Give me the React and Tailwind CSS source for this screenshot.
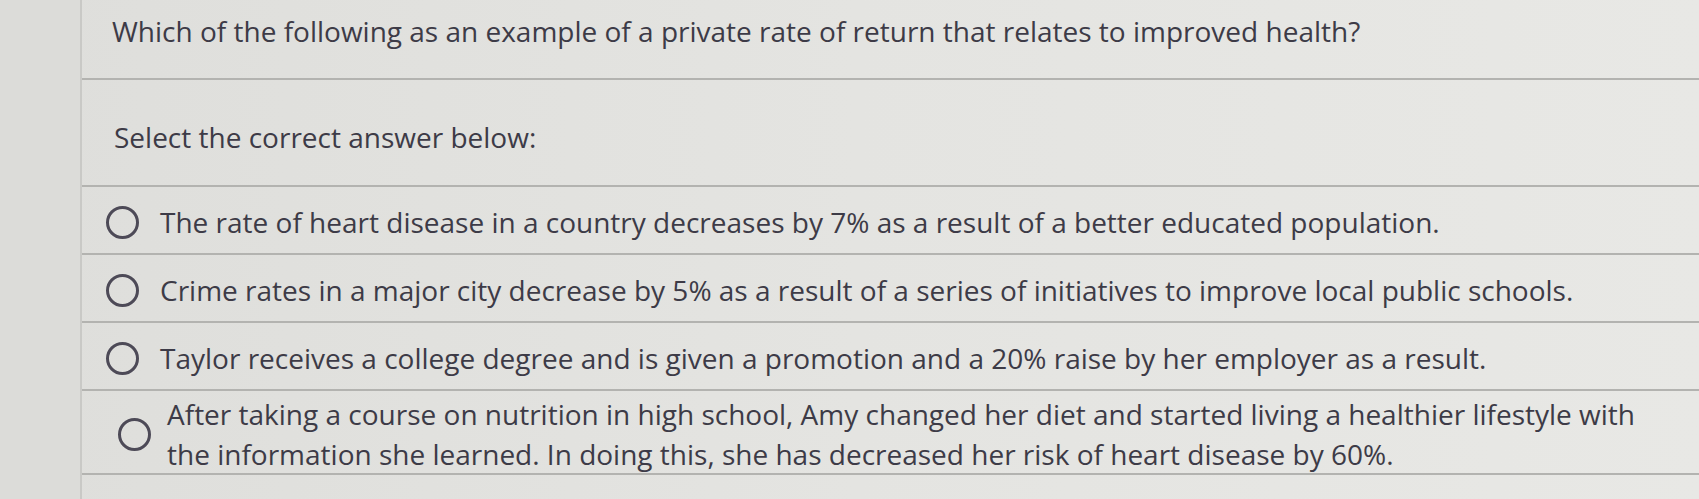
import React from "react";

function Radio() {
  return (
    <span className="block w-[33px] h-[33px] shrink-0 rounded-full border-[3px] border-[#4d4a57]" />
  );
}

const options = [
  "The rate of heart disease in a country decreases by 7% as a result of a better educated population.",
  "Crime rates in a major city decrease by 5% as a result of a series of initiatives to improve local public schools.",
  "Taylor receives a college degree and is given a promotion and a 20% raise by her employer as a result.",
];

export default function App() {
  return (
    <div
      className="w-full h-[499px] flex overflow-hidden bg-gradient-to-r from-[#dededb] via-[#e4e4e1] to-[#e8e8e5] text-[#3d3b47]"
      style={{ fontFamily: '"Open Sans", "Noto Sans", sans-serif' }}
    >
      <div className="w-[82px] shrink-0 bg-[#dcdcd9] border-r-2 border-[#c9c9c6]" />
      <div className="flex-1 flex flex-col">
        <div className="h-[80px] border-b-2 border-[#b3b3b0] pl-[30px] pt-[16px] text-[28px] leading-[30px]">
          Which of the following as an example of a private rate of return that relates to improved health?
        </div>
        <div className="h-[107px] border-b-2 border-[#b3b3b0] pl-[32px] pt-[42px] text-[28px] leading-[30px]">
          Select the correct answer below:
        </div>
        {options.map((o) => (
          <div
            key={o}
            className="h-[68px] border-b-2 border-[#b3b3b0] pl-[24px] pt-[4px] flex items-center gap-[21px] text-[28px] leading-[30px]"
          >
            <Radio />
            <span>{o}</span>
          </div>
        ))}
        <div className="h-[84px] border-b-2 border-[#b3b3b0] pl-[36px] pt-[4px] flex items-center gap-[16px] text-[28px] leading-[40px]">
          <Radio />
          <span className="max-w-[1480px]">
            After taking a course on nutrition in high school, Amy changed her diet and started living a healthier lifestyle with the information she learned. In doing this, she has decreased her risk of heart disease by 60%.
          </span>
        </div>
      </div>
    </div>
  );
}
